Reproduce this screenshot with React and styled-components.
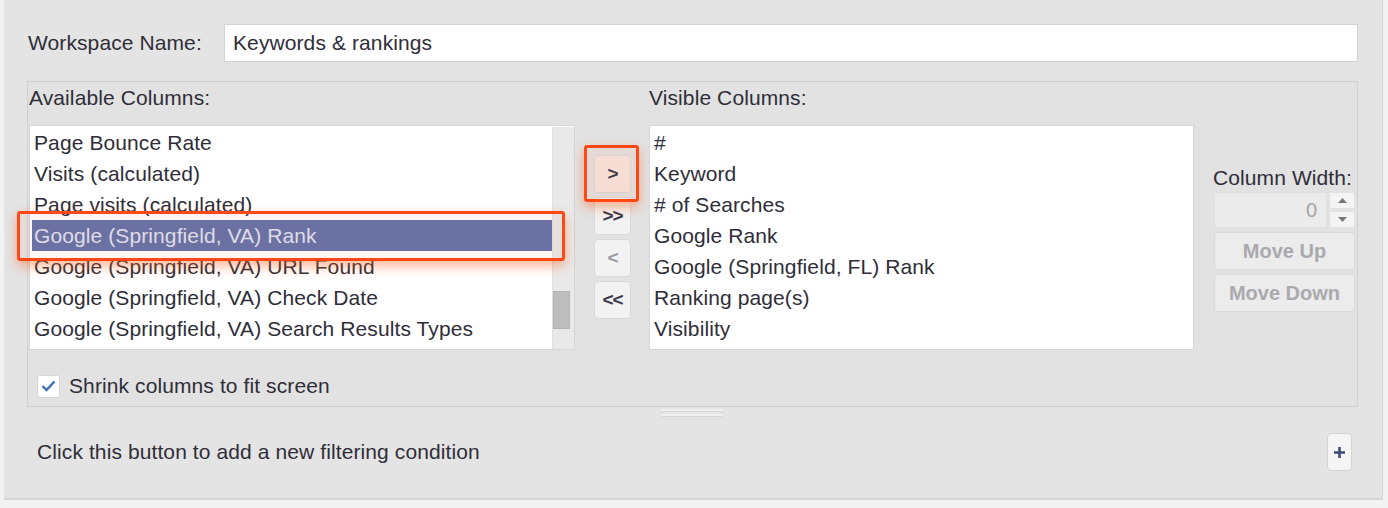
import React from "react";
import styled, { createGlobalStyle } from "styled-components";

const GlobalStyle = createGlobalStyle`
  html, body {
    margin: 0;
    padding: 0;
    background: #f3f3f3;
  }
  body {
    font-family: "Liberation Sans", Arial, sans-serif;
    color: #2f2e38;
  }
`;

const Panel = styled.div`
  width: 1379px;
  height: 500px;
  margin-left: 4px;
  box-sizing: border-box;
  background: #e4e4e4;
  border-right: 1px solid #d6d6d6;
  border-bottom: 2px solid #d6d6d6;
  padding: 24px 24px 0 23px;
  display: flex;
  flex-direction: column;
`;

const Txt = styled.span`
  font-size: 21px;
  line-height: 24px;
  letter-spacing: 0.1px;
  white-space: nowrap;
  color: #2f2e38;
`;

const NameRow = styled.div`
  display: flex;
  align-items: center;
  height: 38px;
  padding-left: 1px;
`;

const NameLabel = styled(Txt)`
  width: 196px;
`;

const NameInput = styled.div`
  flex: 1;
  height: 38px;
  box-sizing: border-box;
  background: #fff;
  border: 1px solid #d4d4d4;
  display: flex;
  align-items: center;
  padding-left: 8px;
`;

const Group = styled.div`
  margin-top: 19px;
  height: 326px;
  box-sizing: border-box;
  border: 1px solid #d0d0d0;
  background: #e2e2e2;
  padding: 4px 1px 0 1px;
  display: flex;
  flex-direction: column;
`;

const Columns = styled.div`
  display: flex;
  align-items: flex-end;
`;

const ListCol = styled.div`
  width: ${(p) => p.w}px;
  display: flex;
  flex-direction: column;
  gap: 15px;
`;

const List = styled.div`
  position: relative;
  height: 225px;
  box-sizing: border-box;
  background: #fff;
  border: 1px solid #d6d6d6;
  padding: 1px 0 0 1px;
  display: flex;
`;

const Rows = styled.div`
  flex: 1;
  overflow: hidden;
`;

const Row = styled.div`
  height: 31px;
  display: flex;
  align-items: center;
  margin-left: ${(p) => (p.sel ? "1px" : "0")};
  padding-left: ${(p) => (p.sel ? "2px" : "3px")};
  background: ${(p) => (p.sel ? "#6272a8" : "transparent")};
  font-size: 21px;
  letter-spacing: 0.1px;
  white-space: nowrap;
  color: ${(p) => (p.sel ? "#dfe3f1" : "#2f2e38")};
`;

const ScrollTrack = styled.div`
  width: 21px;
  background: #e9e9e9;
  border-left: 1px solid #e0e0e0;
  display: flex;
  flex-direction: column;
  padding-top: 164px;
`;

const ScrollThumb = styled.div`
  width: 17px;
  height: 38px;
  background: #bdbdbd;
  border: 1px solid #b4b4b4;
  box-sizing: border-box;
`;

const Highlight = styled.div`
  position: absolute;
  box-sizing: border-box;
  border: 3px solid #ff4816;
  border-radius: 3px;
  background: rgba(255, 110, 60, 0.06);
  box-shadow: 0 5px 12px rgba(255, 90, 20, 0.45);
  pointer-events: none;
`;

const ArrowCol = styled.div`
  position: relative;
  width: 37px;
  height: 225px;
  margin: 0 18px 0 19px;
  padding-top: 30px;
  box-sizing: border-box;
  display: flex;
  flex-direction: column;
  gap: 4px;
`;

const ArrowBtn = styled.div`
  height: 38px;
  box-sizing: border-box;
  border: 1px solid #d8d8d8;
  border-radius: 4px;
  background: ${(p) => (p.hot ? "#f6e6df" : "#f2f2f2")};
  display: flex;
  align-items: center;
  justify-content: center;
  font-size: 19px;
  font-weight: bold;
  letter-spacing: -1px;
  color: ${(p) => (p.dim ? "#9a9aa8" : "#3a3a4a")};
`;

const SideCol = styled.div`
  width: 141px;
  height: 225px;
  margin-left: 20px;
  padding-top: 42px;
  box-sizing: border-box;
  display: flex;
  flex-direction: column;
`;

const SideLabel = styled(Txt)`
  font-size: 21px;
  line-height: 22px;
  margin-bottom: 3px;
  margin-left: -1px;
`;

const Spinner = styled.div`
  display: flex;
  height: 36px;
  gap: 2px;
  margin-bottom: 4px;
`;

const SpinField = styled.div`
  flex: 1;
  background: #ebebeb;
  border: 1px solid #e0e0e0;
  display: flex;
  align-items: center;
  justify-content: flex-end;
  padding-right: 9px;
  font-size: 20px;
  color: #a5a5a5;
`;

const SpinArrows = styled.div`
  width: 26px;
  display: flex;
  flex-direction: column;
  gap: 2px;
`;

const SpinArrow = styled.div`
  flex: 1;
  background: #f4f4f4;
  border: 1px solid #e2e2e2;
  display: flex;
  align-items: center;
  justify-content: center;
`;

const SideBtn = styled.div`
  height: 38px;
  box-sizing: border-box;
  margin-bottom: 4px;
  border: 1px solid #dadada;
  border-radius: 4px;
  background: #ececec;
  display: flex;
  align-items: center;
  justify-content: center;
  font-size: 20px;
  font-weight: bold;
  color: #a9a9ae;
`;

const CheckRow = styled.div`
  display: flex;
  align-items: center;
  gap: 9px;
  margin-top: 24px;
  padding-left: 8px;
`;

const CheckBox = styled.div`
  width: 23px;
  height: 23px;
  box-sizing: border-box;
  background: #fff;
  border: 1px solid #d6d6d6;
  border-radius: 3px;
  display: flex;
  align-items: center;
  justify-content: center;
`;

const Grip = styled.div`
  align-self: center;
  margin-top: 2px;
  margin-left: -2px;
  width: 62px;
  height: 8px;
  display: flex;
  flex-direction: column;
  justify-content: space-between;
`;

const GripLine = styled.div`
  height: 2px;
  background: #f0f0f0;
  border-bottom: 1px solid #d6d6d6;
`;

const BottomRow = styled.div`
  margin-top: 16px;
  height: 38px;
  display: flex;
  align-items: center;
  justify-content: space-between;
  padding: 0 6px 0 10px;
`;

const PlusBtn = styled.div`
  width: 25px;
  height: 38px;
  box-sizing: border-box;
  border: 1px solid #d4d4d4;
  border-radius: 4px;
  background: #f5f5f5;
  display: flex;
  align-items: center;
  justify-content: center;
`;

const available = [
  "Page Bounce Rate",
  "Visits (calculated)",
  "Page visits (calculated)",
  "Google (Springfield, VA) Rank",
  "Google (Springfield, VA) URL Found",
  "Google (Springfield, VA) Check Date",
  "Google (Springfield, VA) Search Results Types",
];

const visible = [
  "#",
  "Keyword",
  "# of Searches",
  "Google Rank",
  "Google (Springfield, FL) Rank",
  "Ranking page(s)",
  "Visibility",
];

export default function App() {
  return (
    <>
      <GlobalStyle />
      <Panel>
        <NameRow>
          <NameLabel>Workspace Name:</NameLabel>
          <NameInput>
            <Txt>Keywords &amp; rankings</Txt>
          </NameInput>
        </NameRow>

        <Group>
          <Columns>
            <ListCol w={546}>
              <Txt>Available Columns:</Txt>
              <List>
                <Rows>
                  {available.map((item, i) => (
                    <Row key={item} sel={i === 3}>
                      {item}
                    </Row>
                  ))}
                </Rows>
                <ScrollTrack>
                  <ScrollThumb />
                </ScrollTrack>
                <Highlight style={{ left: -13, top: 85, width: 548, height: 50 }} />
              </List>
            </ListCol>

            <ArrowCol>
              <ArrowBtn hot>&gt;</ArrowBtn>
              <ArrowBtn>&gt;&gt;</ArrowBtn>
              <ArrowBtn dim>&lt;</ArrowBtn>
              <ArrowBtn>&lt;&lt;</ArrowBtn>
              <Highlight style={{ left: -10, top: 20, width: 55, height: 57 }} />
            </ArrowCol>

            <ListCol w={545}>
              <Txt>Visible Columns:</Txt>
              <List>
                <Rows>
                  {visible.map((item) => (
                    <Row key={item}>{item}</Row>
                  ))}
                </Rows>
              </List>
            </ListCol>

            <SideCol>
              <SideLabel>Column Width:</SideLabel>
              <Spinner>
                <SpinField>0</SpinField>
                <SpinArrows>
                  <SpinArrow>
                    <svg width="9" height="5" viewBox="0 0 9 5">
                      <path d="M0 5 L4.5 0 L9 5 Z" fill="#777" />
                    </svg>
                  </SpinArrow>
                  <SpinArrow>
                    <svg width="9" height="5" viewBox="0 0 9 5">
                      <path d="M0 0 L4.5 5 L9 0 Z" fill="#777" />
                    </svg>
                  </SpinArrow>
                </SpinArrows>
              </Spinner>
              <SideBtn>Move Up</SideBtn>
              <SideBtn>Move Down</SideBtn>
            </SideCol>
          </Columns>

          <CheckRow>
            <CheckBox>
              <svg width="15" height="12" viewBox="0 0 15 12">
                <path d="M1.5 6 L5.5 10 L13.5 1.5" fill="none" stroke="#3d6eb4" strokeWidth="2.4" />
              </svg>
            </CheckBox>
            <Txt>Shrink columns to fit screen</Txt>
          </CheckRow>
        </Group>

        <Grip>
          <GripLine />
          <GripLine />
        </Grip>

        <BottomRow>
          <Txt>Click this button to add a new filtering condition</Txt>
          <PlusBtn>
            <svg width="13" height="13" viewBox="0 0 13 13">
              <path d="M6.5 1 V12 M1 6.5 H12" stroke="#3c4a78" strokeWidth="2.6" />
            </svg>
          </PlusBtn>
        </BottomRow>
      </Panel>
    </>
  );
}
